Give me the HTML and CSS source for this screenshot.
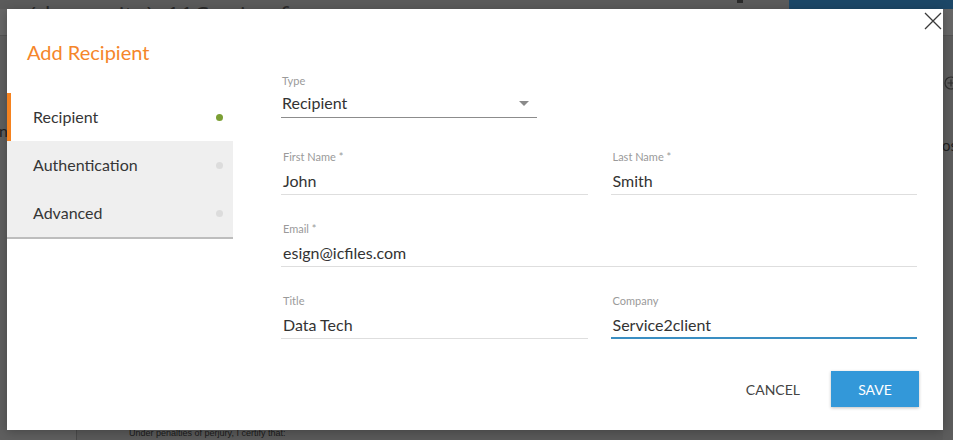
FILE: index.html
```html
<!DOCTYPE html>
<html lang="en">
<head>
<meta charset="utf-8">
<title>Add Recipient</title>
<link rel="stylesheet" href="styles.css">
</head>
<body>
<div class="page">
  <div class="bg">
    <div class="bg-top">
      <div class="bg-title">n (demo site), 11C esign for ...</div>
      <div class="bg-mark"></div>
      <div class="bg-btn"></div>
    </div>
    <div class="bg-sub"></div>
    <div class="bg-main">
      <div class="bg-left"><span class="bg-left-text">n</span></div>
      <div class="bg-doc">
        <p class="bg-doc-text">Under penalties of perjury, I certify that:</p>
      </div>
      <div class="bg-right">
        <svg class="bg-plus" width="14" height="14" viewBox="0 0 14 14"><circle cx="7" cy="7" r="6" fill="none" stroke="#2f2f2f" stroke-width="1.2"/><path d="M7 3.5v7M3.5 7h7" stroke="#2f2f2f" stroke-width="1.2"/></svg>
        <span class="bg-right-text">os</span>
      </div>
    </div>
  </div>

  <div class="modal">
    <button class="close" aria-label="Close">
      <svg width="18" height="18" viewBox="0 0 18 18"><path d="M1 1L17 17M17 1L1 17" stroke="#3a3a3a" stroke-width="1.3" fill="none"/></svg>
    </button>
    <aside class="side">
      <h2 class="title">Add Recipient</h2>
      <nav class="steps">
        <div class="step active"><span>Recipient</span><i class="dot done"></i></div>
        <div class="step"><span>Authentication</span><i class="dot"></i></div>
        <div class="step"><span>Advanced</span><i class="dot"></i></div>
      </nav>
    </aside>
    <section class="form">
      <div class="field select-field">
        <label class="label">Type</label>
        <div class="value select">
          <span>Recipient</span>
          <svg class="caret" width="10" height="5" viewBox="0 0 10 5"><path d="M0 0H10L5 5Z" fill="#8a8a8a"/></svg>
        </div>
      </div>
      <div class="grid">
        <div class="field">
          <label class="label">First Name *</label>
          <div class="value">John</div>
        </div>
        <div class="field">
          <label class="label">Last Name *</label>
          <div class="value">Smith</div>
        </div>
        <div class="field wide">
          <label class="label">Email *</label>
          <div class="value">esign@icfiles.com</div>
        </div>
        <div class="field">
          <label class="label">Title</label>
          <div class="value">Data Tech</div>
        </div>
        <div class="field focused">
          <label class="label">Company</label>
          <div class="value">Service2client</div>
        </div>
      </div>
      <div class="actions">
        <button class="btn-text">CANCEL</button>
        <button class="btn-primary">SAVE</button>
      </div>
    </section>
  </div>
</div>
</body>
</html>
```
FILE: styles.css
```css
* { box-sizing: border-box; }
html, body { margin: 0; padding: 0; }
body { font-family: Lato, "Open Sans", sans-serif; background: #5d5d5d; }

.page {
  position: relative;
  width: 953px;
  height: 440px;
  overflow: hidden;
  background: #5d5d5d;
}

/* dimmed page behind the dialog */
.bg { display: flex; flex-direction: column; height: 100%; }
.bg-top { height: 9px; display: flex; align-items: flex-end; overflow: hidden; background: #5b5b5b; }
.bg-title {
  flex: 1;
  font-family: "Open Sans", sans-serif;
  font-size: 24px;
  line-height: 24px;
  color: #2a2a2a;
  padding-left: 8px;
  margin-bottom: -18px;
  white-space: nowrap;
}
.bg-mark { width: 6px; height: 3px; background: #2a2a2a; margin: 0 46px 6px 0; align-self: flex-start; }
.bg-btn { width: 164px; height: 9px; background: #1c4767; }
.bg-sub { height: 27px; background: #676767; border-bottom: 1px solid #545454; }
.bg-main { flex: 1; display: flex; }
.bg-left { width: 77px; border-right: 1px solid #4a4a4a; background: #5f5f5f; padding-top: 86px; line-height: 18px; }
.bg-left-text { font-size: 16px; color: #222; margin-left: -1px; }
.bg-doc { flex: 1; display: flex; align-items: flex-end; background: #5a5a5a; }
.bg-doc-text {
  margin: 0 0 2px 52px;
  font-family: "Liberation Sans", Arial, sans-serif;
  font-size: 9px;
  line-height: 9px;
  color: #1b1b1b;
}
.bg-right { width: 10px; display: flex; flex-direction: column; background: #5d5d5d; }
.bg-plus { margin: 40px 0 0 1px; flex: none; }
.bg-right-text { margin-top: 46px; font-size: 15px; color: #222; margin-left: -1px; }

/* dialog */
.modal {
  position: absolute;
  left: 7px;
  top: 9px;
  width: 936px;
  height: 421px;
  background: #fff;
  display: flex;
  box-shadow: 0 2px 10px rgba(0,0,0,0.25);
}
.close {
  position: absolute;
  top: 3px;
  right: 1px;
  width: 18px;
  height: 18px;
  padding: 0;
  border: 0;
  background: transparent;
  display: flex;
}

.side { width: 226px; flex: none; padding-top: 31px; }
.title {
  margin: 0 0 29px 20px;
  font-size: 20px;
  line-height: 24px;
  font-weight: 400;
  color: #f5862a;
}
.steps { background: #efefef; border-bottom: 2px solid #bdbdbd; }
.step {
  height: 48px;
  display: flex;
  align-items: center;
  justify-content: space-between;
  padding: 0 10px 1px 26px;
  font-size: 16px;
  color: #363636;
}
.step.active { background: #fff; border-left: 4px solid #f5821f; padding-left: 22px; }
.dot { width: 7px; height: 7px; border-radius: 50%; background: #dcdcdc; margin-top: 1px; }
.dot.done { background: #7b9f34; }

.form { flex: 1; padding: 65px 26px 0 48px; }
.field { display: flex; flex-direction: column; }
.label { font-size: 11px; line-height: 14px; color: #9a9a9a; padding-left: 2px; }
.value {
  margin-top: 7px;
  font-size: 16px;
  line-height: 20px;
  color: #333;
  padding: 0 0 3px 2px;
  border-bottom: 1px solid #dedede;
}
.select-field { width: 256px; }
.select-field .label { padding-left: 1px; }
.select {
  margin-top: 5px;
  padding: 0 0 4px 1px;
  border-bottom-color: #8c8c8c;
  display: flex;
  align-items: center;
  justify-content: space-between;
}
.caret { margin-right: 8px; }

.grid {
  margin-top: 32px;
  display: grid;
  grid-template-columns: 1fr 1fr;
  column-gap: 23px;
  row-gap: 27px;
}
.wide { grid-column: 1 / 3; }
.focused .value { border-bottom: 2px solid #3a8ec2; padding-bottom: 2px; }

.actions {
  margin: 32px -2px 0 0;
  display: flex;
  justify-content: flex-end;
  gap: 15px;
}
.btn-text, .btn-primary {
  height: 36px;
  border: 0;
  font-family: Lato, sans-serif;
  font-size: 14px;
  padding: 0 16px;
  cursor: pointer;
}
.btn-text { background: transparent; color: #444; }
.btn-primary {
  width: 88px;
  background: #3398d9;
  color: #fff;
  box-shadow: 0 1px 3px rgba(0,0,0,0.25);
}
```
